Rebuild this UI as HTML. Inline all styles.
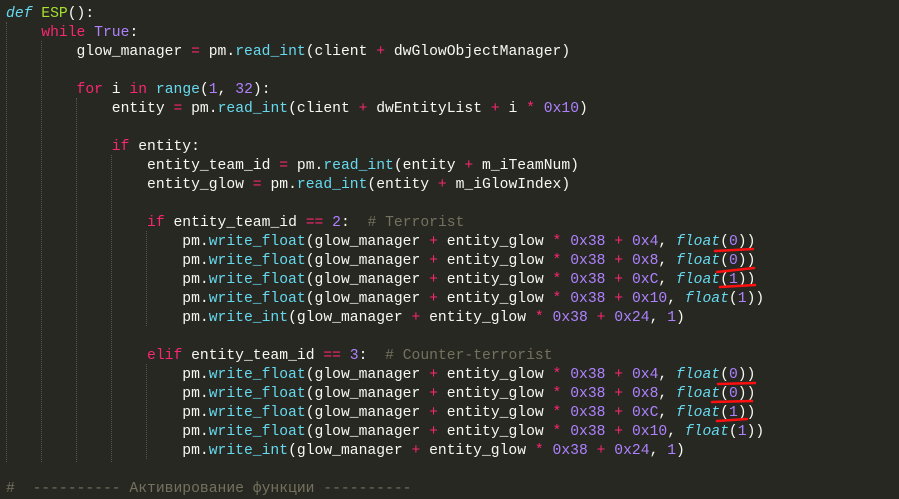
<!DOCTYPE html>
<html><head><meta charset="utf-8"><style>
html,body{margin:0;padding:0;background:#272822;width:899px;height:492px;overflow:hidden}
#c{position:absolute;left:6px;top:5px;font-family:"Liberation Mono",monospace;font-size:14.7px;color:#f8f8f2;white-space:pre}
.l{position:absolute;left:0;height:19px;line-height:19px}
.k{color:#f92672}.d{color:#66d9ef;font-style:italic}.f{color:#a6e22e}.n{color:#ae81ff}.m{color:#66d9ef}.c{color:#75715e}
.g{position:absolute;width:0;border-left:1px dotted #55564f}
</style></head><body>
<div class="g" style="left:6px;top:22px;height:440px"></div>
<div class="g" style="left:41px;top:41px;height:421px"></div>
<div class="g" style="left:76px;top:98px;height:364px"></div>
<div class="g" style="left:111px;top:155px;height:307px"></div>
<div class="g" style="left:146px;top:231px;height:95px"></div>
<div class="g" style="left:146px;top:364px;height:95px"></div>
<div id="c">
<div class="l" style="top:0px"><span class="d">def</span> <span class="f">ESP</span>():</div>
<div class="l" style="top:19px">    <span class="k">while</span> <span class="n">True</span>:</div>
<div class="l" style="top:38px">        glow_manager <span class="k">=</span> pm.<span class="m">read_int</span>(client <span class="k">+</span> dwGlowObjectManager)</div>
<div class="l" style="top:76px">        <span class="k">for</span> i <span class="k">in</span> <span class="m">range</span>(<span class="n">1</span>, <span class="n">32</span>):</div>
<div class="l" style="top:95px">            entity <span class="k">=</span> pm.<span class="m">read_int</span>(client <span class="k">+</span> dwEntityList <span class="k">+</span> i <span class="k">*</span> <span class="n">0x10</span>)</div>
<div class="l" style="top:133px">            <span class="k">if</span> entity:</div>
<div class="l" style="top:152px">                entity_team_id <span class="k">=</span> pm.<span class="m">read_int</span>(entity <span class="k">+</span> m_iTeamNum)</div>
<div class="l" style="top:171px">                entity_glow <span class="k">=</span> pm.<span class="m">read_int</span>(entity <span class="k">+</span> m_iGlowIndex)</div>
<div class="l" style="top:209px">                <span class="k">if</span> entity_team_id <span class="k">==</span> <span class="n">2</span>:  <span class="c"># Terrorist</span></div>
<div class="l" style="top:228px">                    pm.<span class="m">write_float</span>(glow_manager <span class="k">+</span> entity_glow <span class="k">*</span> <span class="n">0x38</span> <span class="k">+</span> <span class="n">0x4</span>, <span class="d">float</span>(<span class="n">0</span>))</div>
<div class="l" style="top:247px">                    pm.<span class="m">write_float</span>(glow_manager <span class="k">+</span> entity_glow <span class="k">*</span> <span class="n">0x38</span> <span class="k">+</span> <span class="n">0x8</span>, <span class="d">float</span>(<span class="n">0</span>))</div>
<div class="l" style="top:266px">                    pm.<span class="m">write_float</span>(glow_manager <span class="k">+</span> entity_glow <span class="k">*</span> <span class="n">0x38</span> <span class="k">+</span> <span class="n">0xC</span>, <span class="d">float</span>(<span class="n">1</span>))</div>
<div class="l" style="top:285px">                    pm.<span class="m">write_float</span>(glow_manager <span class="k">+</span> entity_glow <span class="k">*</span> <span class="n">0x38</span> <span class="k">+</span> <span class="n">0x10</span>, <span class="d">float</span>(<span class="n">1</span>))</div>
<div class="l" style="top:304px">                    pm.<span class="m">write_int</span>(glow_manager <span class="k">+</span> entity_glow <span class="k">*</span> <span class="n">0x38</span> <span class="k">+</span> <span class="n">0x24</span>, <span class="n">1</span>)</div>
<div class="l" style="top:342px">                <span class="k">elif</span> entity_team_id <span class="k">==</span> <span class="n">3</span>:  <span class="c"># Counter-terrorist</span></div>
<div class="l" style="top:361px">                    pm.<span class="m">write_float</span>(glow_manager <span class="k">+</span> entity_glow <span class="k">*</span> <span class="n">0x38</span> <span class="k">+</span> <span class="n">0x4</span>, <span class="d">float</span>(<span class="n">0</span>))</div>
<div class="l" style="top:380px">                    pm.<span class="m">write_float</span>(glow_manager <span class="k">+</span> entity_glow <span class="k">*</span> <span class="n">0x38</span> <span class="k">+</span> <span class="n">0x8</span>, <span class="d">float</span>(<span class="n">0</span>))</div>
<div class="l" style="top:399px">                    pm.<span class="m">write_float</span>(glow_manager <span class="k">+</span> entity_glow <span class="k">*</span> <span class="n">0x38</span> <span class="k">+</span> <span class="n">0xC</span>, <span class="d">float</span>(<span class="n">1</span>))</div>
<div class="l" style="top:418px">                    pm.<span class="m">write_float</span>(glow_manager <span class="k">+</span> entity_glow <span class="k">*</span> <span class="n">0x38</span> <span class="k">+</span> <span class="n">0x10</span>, <span class="d">float</span>(<span class="n">1</span>))</div>
<div class="l" style="top:437px">                    pm.<span class="m">write_int</span>(glow_manager <span class="k">+</span> entity_glow <span class="k">*</span> <span class="n">0x38</span> <span class="k">+</span> <span class="n">0x24</span>, <span class="n">1</span>)</div>
<div class="l" style="top:475px"><span class="c">#  ---------- Активирование функции ----------</span></div>
</div>
<svg width="899" height="492" style="position:absolute;left:0;top:0" fill="none" stroke="#ff1010" stroke-width="2.5" stroke-linecap="round">
<path d="M715 251 L753 249"/>
<path d="M717 272 L754 268"/>
<path d="M720 287 L755 285"/>
<path d="M718 384 L755 383"/>
<path d="M712 402 L752 401"/>
<path d="M717 421 L747 419"/>
</svg>
</body></html>
